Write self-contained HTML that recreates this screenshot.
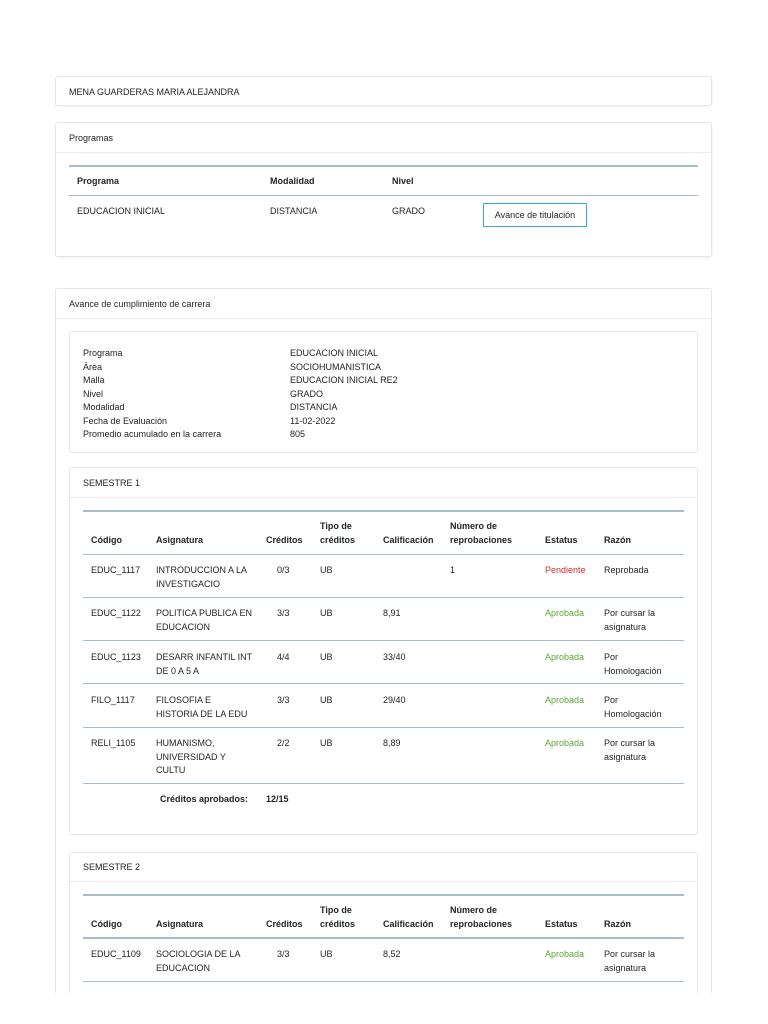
<!DOCTYPE html>
<html><head><meta charset="utf-8"><style>
*{margin:0;padding:0;box-sizing:border-box}
html,body{width:768px;height:1024px;overflow:hidden}
body{background:#fff;position:relative;font-family:"Liberation Sans",sans-serif;color:#212529}
.c{position:absolute;border:1px solid #e3e7ea;border-radius:3px;background:#fff;box-shadow:0 1px 2px rgba(0,0,0,.06)}
.o{border-bottom:none;border-radius:3px 3px 0 0;box-shadow:none}
.h{position:absolute;height:1px;background:#e8ecef}
.l{position:absolute;height:1px;background:#a9bcc9}
.L{position:absolute;height:2px;background:#a9bcc9}
.t{position:absolute;font-size:9px;line-height:13.5px;white-space:nowrap;margin-top:2px}
.b{font-weight:bold}
.r{color:#d32f2f}.g{color:#5aa832}
.btn{position:absolute;left:483px;top:203px;width:104px;height:24px;border:1px solid #39a7e0;font-size:9px;line-height:22px;text-align:center}
</style></head><body>
<div class="c" style="left:55px;top:76px;width:657px;height:30px"></div>
<div class="t" style="left:69px;top:84px">MENA GUARDERAS MARIA ALEJANDRA</div>

<div class="c" style="left:55px;top:122px;width:657px;height:135px"></div>
<div class="h" style="left:56px;top:152px;width:655px"></div>
<div class="t" style="left:69px;top:130px">Programas</div>
<div class="L" style="left:69px;top:165px;width:629px"></div>
<div class="t b" style="left:77px;top:173px">Programa</div>
<div class="t b" style="left:270px;top:173px">Modalidad</div>
<div class="t b" style="left:392px;top:173px">Nivel</div>
<div class="l" style="left:69px;top:195px;width:629px"></div>
<div class="t" style="left:77px;top:203px">EDUCACION INICIAL</div>
<div class="t" style="left:270px;top:203px">DISTANCIA</div>
<div class="t" style="left:392px;top:203px">GRADO</div>
<div class="btn">Avance de titulación</div>

<div class="c o" style="left:55px;top:288px;width:657px;height:705px;box-shadow:none"></div>
<div class="h" style="left:56px;top:318px;width:655px"></div>
<div class="t" style="left:69px;top:296px">Avance de cumplimiento de carrera</div>
<div class="c" style="left:69px;top:331px;width:629px;height:122px;box-shadow:none"></div>
<div class="t" style="left:83px;top:345px;line-height:13.5px">Programa<br>Área<br>Malla<br>Nivel<br>Modalidad<br>Fecha de Evaluación<br>Promedio acumulado en la carrera</div>
<div class="t" style="left:290px;top:345px;line-height:13.5px">EDUCACION INICIAL<br>SOCIOHUMANISTICA<br>EDUCACION INICIAL RE2<br>GRADO<br>DISTANCIA<br>11-02-2022<br>805</div>

<div class="c" style="left:69px;top:467px;width:629px;height:368px;box-shadow:none"></div>
<div class="h" style="left:70px;top:497px;width:627px"></div>
<div class="t" style="left:83px;top:475px">SEMESTRE 1</div>
<div class="L" style="left:83px;top:510px;width:601px"></div>
<div class="t b" style="left:91px;top:532px">Código</div>
<div class="t b" style="left:156px;top:532px">Asignatura</div>
<div class="t b" style="left:266px;top:532px">Créditos</div>
<div class="t b" style="left:320px;top:518px">Tipo de<br>créditos</div>
<div class="t b" style="left:383px;top:532px">Calificación</div>
<div class="t b" style="left:450px;top:518px">Número de<br>reprobaciones</div>
<div class="t b" style="left:545px;top:532px">Estatus</div>
<div class="t b" style="left:604px;top:532px">Razón</div>
<div class="l" style="left:83px;top:554px;width:601px"></div>

<div class="t" style="left:91px;top:562px">EDUC_1117</div>
<div class="t" style="left:156px;top:562px">INTRODUCCION A LA<br>INVESTIGACIO</div>
<div class="t" style="left:277px;top:562px">0/3</div>
<div class="t" style="left:320px;top:562px">UB</div>
<div class="t" style="left:450px;top:562px">1</div>
<div class="t r" style="left:545px;top:562px">Pendiente</div>
<div class="t" style="left:604px;top:562px">Reprobada</div>
<div class="l" style="left:83px;top:597px;width:601px"></div>

<div class="t" style="left:91px;top:605px">EDUC_1122</div>
<div class="t" style="left:156px;top:605px">POLITICA PUBLICA EN<br>EDUCACION</div>
<div class="t" style="left:277px;top:605px">3/3</div>
<div class="t" style="left:320px;top:605px">UB</div>
<div class="t" style="left:383px;top:605px">8,91</div>
<div class="t g" style="left:545px;top:605px">Aprobada</div>
<div class="t" style="left:604px;top:605px">Por cursar la<br>asignatura</div>
<div class="l" style="left:83px;top:640px;width:601px"></div>

<div class="t" style="left:91px;top:649px">EDUC_1123</div>
<div class="t" style="left:156px;top:649px">DESARR INFANTIL INT<br>DE 0 A 5 A</div>
<div class="t" style="left:277px;top:649px">4/4</div>
<div class="t" style="left:320px;top:649px">UB</div>
<div class="t" style="left:383px;top:649px">33/40</div>
<div class="t g" style="left:545px;top:649px">Aprobada</div>
<div class="t" style="left:604px;top:649px">Por<br>Homologación</div>
<div class="l" style="left:83px;top:683px;width:601px"></div>

<div class="t" style="left:91px;top:692px">FILO_1117</div>
<div class="t" style="left:156px;top:692px">FILOSOFIA E<br>HISTORIA DE LA EDU</div>
<div class="t" style="left:277px;top:692px">3/3</div>
<div class="t" style="left:320px;top:692px">UB</div>
<div class="t" style="left:383px;top:692px">29/40</div>
<div class="t g" style="left:545px;top:692px">Aprobada</div>
<div class="t" style="left:604px;top:692px">Por<br>Homologación</div>
<div class="l" style="left:83px;top:727px;width:601px"></div>

<div class="t" style="left:91px;top:735px">RELI_1105</div>
<div class="t" style="left:156px;top:735px">HUMANISMO,<br>UNIVERSIDAD Y<br>CULTU</div>
<div class="t" style="left:277px;top:735px">2/2</div>
<div class="t" style="left:320px;top:735px">UB</div>
<div class="t" style="left:383px;top:735px">8,89</div>
<div class="t g" style="left:545px;top:735px">Aprobada</div>
<div class="t" style="left:604px;top:735px">Por cursar la<br>asignatura</div>
<div class="l" style="left:83px;top:783px;width:601px"></div>
<div class="t b" style="left:160px;top:791px">Créditos aprobados:</div>
<div class="t b" style="left:266px;top:791px">12/15</div>

<div class="c o" style="left:69px;top:852px;width:629px;height:141px"></div>
<div class="h" style="left:70px;top:881px;width:627px"></div>
<div class="t" style="left:83px;top:859px">SEMESTRE 2</div>
<div class="L" style="left:83px;top:894px;width:601px"></div>
<div class="t b" style="left:91px;top:916px">Código</div>
<div class="t b" style="left:156px;top:916px">Asignatura</div>
<div class="t b" style="left:266px;top:916px">Créditos</div>
<div class="t b" style="left:320px;top:902px">Tipo de<br>créditos</div>
<div class="t b" style="left:383px;top:916px">Calificación</div>
<div class="t b" style="left:450px;top:902px">Número de<br>reprobaciones</div>
<div class="t b" style="left:545px;top:916px">Estatus</div>
<div class="t b" style="left:604px;top:916px">Razón</div>
<div class="L" style="left:83px;top:937px;width:601px"></div>
<div class="t" style="left:91px;top:946px">EDUC_1109</div>
<div class="t" style="left:156px;top:946px">SOCIOLOGIA DE LA<br>EDUCACION</div>
<div class="t" style="left:277px;top:946px">3/3</div>
<div class="t" style="left:320px;top:946px">UB</div>
<div class="t" style="left:383px;top:946px">8,52</div>
<div class="t g" style="left:545px;top:946px">Aprobada</div>
<div class="t" style="left:604px;top:946px">Por cursar la<br>asignatura</div>
<div class="l" style="left:83px;top:981px;width:601px"></div>
</body></html>
